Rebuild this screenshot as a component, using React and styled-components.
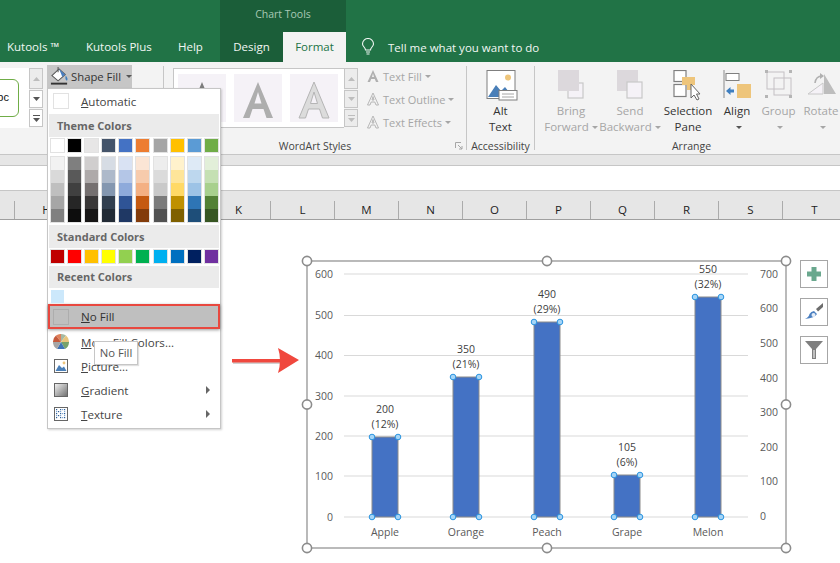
import React from "react";
import styled, { createGlobalStyle } from "styled-components";

const GlobalStyle = createGlobalStyle`
  html, body {
    margin: 0;
    padding: 0;
    background: #fff;
    font-family: "Open Sans", "Noto Sans", sans-serif;
    overflow: hidden;
  }
`;

const themeTop = ["#ffffff", "#000000", "#e7e6e6", "#44546a", "#4472c4", "#ed7d31", "#a5a5a5", "#ffc000", "#5b9bd5", "#70ad47"];
const themeShades = [
  ["#f2f2f2", "#d9d9d9", "#bfbfbf", "#a6a6a6", "#808080"],
  ["#7f7f7f", "#595959", "#404040", "#262626", "#0d0d0d"],
  ["#d0cece", "#aeaaaa", "#757070", "#3a3838", "#171616"],
  ["#d6dce4", "#adb9ca", "#8497b0", "#323f4f", "#222b35"],
  ["#d9e2f3", "#b4c6e7", "#8eaadb", "#2f5496", "#1f3864"],
  ["#fbe5d5", "#f7cbac", "#f4b083", "#c55a11", "#833c0b"],
  ["#ededed", "#dbdbdb", "#c9c9c9", "#7b7b7b", "#525252"],
  ["#fff2cc", "#fee599", "#ffd965", "#bf9000", "#7f6000"],
  ["#deeaf6", "#bdd7ee", "#9dc3e6", "#2e75b5", "#1e4e79"],
  ["#e2efd9", "#c5e0b3", "#a8d08d", "#538135", "#375623"],
];
const standard = ["#c00000", "#ff0000", "#ffc000", "#ffff00", "#92d050", "#00b050", "#00b0f0", "#0070c0", "#002060", "#7030a0"];

const columns = ["", "H", "", "", "K", "L", "M", "N", "O", "P", "Q", "R", "S", "T"];

const Page = styled.div`
  position: relative;
  width: 840px;
  height: 563px;
  overflow: hidden;
  background: #fff;
`;

const Header = styled.header`
  background: #217346;
`;

const TitleRow = styled.div`
  height: 32px;
  padding-left: 220px;
`;

const ContextLabel = styled.div`
  width: 126px;
  height: 32px;
  background: #1b5e39;
  color: #a9c9b5;
  font-size: 10.5px;
  line-height: 29px;
  text-align: center;
`;

const TabRow = styled.nav`
  height: 30px;
  display: flex;
  align-items: stretch;
`;

const Tab = styled.div`
  width: ${(p) => p.$width}px;
  padding-left: ${(p) => p.$pad || 0}px;
  box-sizing: border-box;
  font-size: 11.5px;
  line-height: 29px;
  white-space: nowrap;
  text-align: ${(p) => (p.$center ? "center" : "left")};
  color: ${(p) => (p.$active ? "#217346" : "#f2f7f4")};
  background: ${(p) => (p.$active ? "#f3f3f3" : p.$context ? "#1b5e39" : "transparent")};
`;

const TellMe = styled.div`
  display: flex;
  align-items: center;
  gap: 13px;
  padding-left: 15px;
  color: #f2f7f4;
  font-size: 11.5px;
  white-space: nowrap;
`;

const Ribbon = styled.section`
  height: 92px;
  display: flex;
  background: #f3f3f3;
  border-bottom: 1px solid #c6c6c6;
`;

const Group = styled.div`
  position: relative;
  width: ${(p) => p.$width}px;
  flex: none;
  box-sizing: border-box;
  display: flex;
  flex-direction: column;
  margin-top: 4px;
  margin-bottom: 4px;
  border-right: ${(p) => (p.$last ? "none" : "1px solid #c6c6c6")};
`;

const GroupBody = styled.div`
  height: 73px;
  display: flex;
  align-items: flex-start;
`;

const GroupLabel = styled.div`
  height: 11px;
  font-size: 10.5px;
  line-height: 14px;
  color: #444;
  text-align: center;
  white-space: nowrap;
  padding-left: ${(p) => p.$pad || 0}px;
`;

const Launcher = styled.svg`
  position: absolute;
  right: 3px;
  bottom: 0;
`;

const Gallery = styled.div`
  width: ${(p) => p.$width}px;
  height: 60px;
  margin-top: 2px;
  margin-left: ${(p) => p.$left || 0}px;
  box-sizing: border-box;
  flex: none;
  display: flex;
  align-items: center;
  gap: 8px;
  padding-left: ${(p) => p.$pad || 0}px;
  background: #fff;
  border: ${(p) => (p.$bordered ? "1px solid #c6c6c6" : "none")};
  border-width: ${(p) => (p.$bordered ? "1px 0 1px 1px" : "0")};
  overflow: hidden;
`;

const StyleSample = styled.div`
  width: 40px;
  height: 38px;
  margin-left: -21px;
  box-sizing: border-box;
  flex: none;
  border: 1px solid #70ad47;
  border-radius: 6px;
  font-family: "Liberation Sans", sans-serif;
  font-size: 11px;
  line-height: 34px;
  color: #111;
  text-align: right;
  padding-right: 9px;
  white-space: nowrap;
`;

const ScrollColumn = styled.div`
  width: 14px;
  height: 60px;
  margin-top: 2px;
  flex: none;
  display: flex;
  flex-direction: column;
  gap: 1px;
`;

const ScrollButton = styled.div`
  flex: ${(p) => (p.$tall ? "0 0 21px" : "0 0 18px")};
  box-sizing: border-box;
  display: flex;
  align-items: center;
  justify-content: center;
  border: 1px solid #c6c6c6;
  background: ${(p) => (p.$off ? "#ececec" : "#fff")};
`;

const ShapeFill = styled.div`
  margin-left: 4px;
  margin-top: -1px;
  width: 85px;
  height: 23px;
  flex: none;
  display: flex;
  align-items: center;
  gap: 2px;
  padding-left: 3px;
  box-sizing: border-box;
  background: #c6c6c6;
  color: #333;
  font-size: 11.3px;
  white-space: nowrap;
`;

const WordTile = styled.div`
  width: 48px;
  height: 48px;
  flex: none;
  display: flex;
  align-items: flex-end;
  justify-content: center;
  background: #f5f2f7;
  overflow: hidden;
`;

const TextEffects = styled.div`
  margin-left: 8px;
  display: flex;
  flex-direction: column;
  gap: 3px;
`;

const Caret = styled.span`
  display: inline-block;
  width: 0;
  height: 0;
  margin-left: 3px;
  vertical-align: middle;
  border-left: 3px solid transparent;
  border-right: 3px solid transparent;
  border-top: 3px solid ${(p) => p.$color || "#a6a6a6"};
`;

const EffectRow = styled.div`
  height: 20px;
  display: flex;
  align-items: center;
  gap: 3px;
  color: #a6a6a6;
  font-size: 11px;
  white-space: nowrap;

  ${Caret} {
    margin-left: 0;
  }
`;

const LargeButton = styled.div`
  width: ${(p) => p.$width}px;
  flex: none;
  display: flex;
  flex-direction: column;
  align-items: center;
  color: ${(p) => (p.$off ? "#a6a6a6" : "#333")};
  font-size: 11.5px;
  line-height: 16px;
  white-space: nowrap;
`;

const LargeIcon = styled.div`
  height: 37px;
  box-sizing: border-box;
  padding-top: 4px;
  display: flex;
  align-items: flex-start;
  justify-content: center;
`;

const Arrange = styled.div`
  display: flex;
  padding-left: 7px;
`;

const FormulaGap = styled.div`
  height: 10px;
  background: #e6e6e6;
  border-bottom: 1px solid #c6c6c6;
`;

const FormulaBar = styled.div`
  height: 24px;
  background: #fff;
  border-bottom: 1px solid #c6c6c6;
`;

const ColumnHeaders = styled.div`
  height: 28px;
  display: flex;
  background: #e6e6e6;
  border-bottom: 1px solid #9f9f9f;
`;

const ColumnHead = styled.div`
  flex: none;
  width: ${(p) => p.$width}px;
  height: 18px;
  margin-top: 10px;
  box-sizing: border-box;
  border-right: 1px solid #ababab;
  font-size: 11.5px;
  line-height: 18px;
  color: #222;
  text-align: center;
`;

const Sheet = styled.main`
  display: flex;
  align-items: flex-start;
  padding: 35px 0 0 232px;
`;

const ArrowWrap = styled.svg`
  flex: none;
  margin-top: 91px;
  margin-right: 1px;
`;

const ChartObject = styled.svg`
  flex: none;
`;

const ChartTools = styled.div`
  flex: none;
  display: flex;
  flex-direction: column;
  gap: 10px;
  margin-left: 7px;
  margin-top: 5px;
`;

const ChartTool = styled.div`
  width: 28px;
  height: 28px;
  box-sizing: border-box;
  display: flex;
  align-items: center;
  justify-content: center;
  background: #fff;
  border: 1px solid #a6a6a6;
`;

const Menu = styled.div`
  position: absolute;
  left: 47px;
  top: 88px;
  width: 174px;
  height: 341px;
  box-sizing: border-box;
  padding: 1px;
  background: #fff;
  border: 1px solid #c6c6c6;
  box-shadow: 1px 1px 2px rgba(0, 0, 0, 0.18);
  color: #444;
  font-size: 11.6px;
`;

const MenuRow = styled.div`
  height: 24px;
  box-sizing: border-box;
  padding-bottom: 2px;
  display: flex;
  align-items: center;
  white-space: nowrap;
  padding-left: ${(p) => p.$pad || 4}px;
`;

const MenuIcon = styled.div`
  width: 16px;
  height: 16px;
  flex: none;
  margin-right: 12px;
  display: flex;
  align-items: center;
  justify-content: center;
`;

const EmptySwatch = styled.div`
  width: 16px;
  height: 16px;
  box-sizing: border-box;
  flex: none;
  margin-right: 12px;
  border: 1px solid ${(p) => (p.$hot ? "#adadad" : "#e2e2e2")};
`;

const SubArrow = styled.span`
  margin-left: auto;
  margin-right: 9px;
  width: 0;
  height: 0;
  border-top: 4px solid transparent;
  border-bottom: 4px solid transparent;
  border-left: 4px solid #666;
`;

const MenuHead = styled.div`
  height: ${(p) => p.$height || 23}px;
  margin-top: ${(p) => p.$top || 0}px;
  padding-left: 8px;
  background: #ebebeb;
  color: #666;
  font-weight: 700;
  font-size: 11px;
  line-height: ${(p) => p.$height || 23}px;
`;

const SwatchGrid = styled.div`
  display: grid;
  grid-template-columns: repeat(10, 13px);
  column-gap: 4.1px;
  margin-left: 2px;
  margin-top: ${(p) => p.$top || 2}px;
`;

const Swatch = styled.div`
  height: 13px;
  background: ${(p) => p.$color};
  box-shadow: ${(p) => (p.$flat ? "none" : "0 0 0 1px #e2e2e2")};
`;

const ShadeColumn = styled.div`
  outline: 1px solid #e2e2e2;
`;

const NoFillRow = styled(MenuRow)`
  height: 25px;
  margin: 1px -1px 2px;
  padding-left: 3px;
  padding-bottom: 0;
  background: #bfbfbf;
  color: #333;
  border: 2px solid #e8483f;
  box-shadow: 0 1px 3px rgba(0, 0, 0, 0.4);
`;

const Tooltip = styled.div`
  position: absolute;
  left: 94px;
  top: 341px;
  width: 44px;
  height: 24px;
  box-sizing: border-box;
  background: #fff;
  border: 1px solid #c6c6c6;
  box-shadow: 1px 1px 1px rgba(0, 0, 0, 0.12);
  color: #555;
  font-size: 11.3px;
  line-height: 21px;
  text-align: center;
  white-space: nowrap;
`;

const BucketIcon = () => (
  <svg width="20" height="21" viewBox="0 0 20 21">
    <path d="M2 9.5 L9.5 2.5 L16 8.5 L8.5 15 Z" fill="#fff" stroke="#555" strokeWidth="1.1" />
    <path d="M8.5 0.5 V6" stroke="#555" strokeWidth="1.1" />
    <path d="M9.5 2.5 L16 8.5 L13 11 L11 6Z" fill="#4a7fc0" />
    <path d="M16.5 9.5 Q19.5 13 17.8 15 Q15.5 14 16.5 9.5Z" fill="#3f7fc0" />
    <rect x="1" y="17" width="17" height="2" fill="#333" />
  </svg>
);

const LetterA = ({ size = 14, outline }) => (
  <svg width={size} height={size} viewBox="0 0 14 14">
    <path
      d="M7 1 L12.5 13 H10 L8.8 10 H5.2 L4 13 H1.5 Z M6 8 H8 L7 4.5 Z"
      fill={outline ? "#f3f3f3" : "#b0b0b0"}
      stroke={outline ? "#b0b0b0" : "none"}
      strokeWidth="0.9"
      fillRule="evenodd"
    />
  </svg>
);

const WordA = ({ outline, dark }) => (
  <svg width="40" height="44" viewBox="0 0 40 44">
    <path
      d="M20 4 L35 40 H28.5 L25.5 31 H14.5 L11.5 40 H5 Z M16.5 25.5 H23.5 L20 14 Z"
      fill={outline ? "#dcdcdc" : dark ? "#7d7d7d" : "#aeaeae"}
      stroke={outline ? "#b5b5b5" : "none"}
      strokeWidth="1"
      fillRule="evenodd"
    />
  </svg>
);

const ChevUp = ({ color = "#bdbdbd" }) => (
  <svg width="7" height="4" viewBox="0 0 7 4"><path d="M0 4 L3.5 0 L7 4Z" fill={color} /></svg>
);
const ChevDown = ({ color = "#555" }) => (
  <svg width="7" height="4" viewBox="0 0 7 4"><path d="M0 0 L3.5 4 L7 0Z" fill={color} /></svg>
);
const ChevMore = ({ color = "#555" }) => (
  <svg width="7" height="7" viewBox="0 0 7 7">
    <rect width="7" height="1" fill={color} />
    <path d="M0 3 L3.5 7 L7 3Z" fill={color} />
  </svg>
);

const Bulb = () => (
  <svg width="14" height="18" viewBox="0 0 14 18" fill="none" stroke="#f2f7f4" strokeWidth="1.1">
    <path d="M4.5 12 C4.5 9.5 1.5 8.5 1.5 6 A5.5 5.5 0 0 1 12.5 6 C12.5 8.5 9.5 9.5 9.5 12 Z" />
    <path d="M5 14 H9 M5.5 16 H8.5" />
  </svg>
);

const AltIcon = () => (
  <svg width="34" height="31" viewBox="-2 0 34 31">
    <rect x="1" y="0.5" width="28" height="28" fill="#fff" stroke="#7f7f7f" />
    <circle cx="22" cy="7.5" r="3" fill="#eec57b" />
    <path d="M2 27 L10 15 L15 21 L19 17 L27 27Z" fill="#4a7fb8" />
    <rect x="13" y="20.5" width="18" height="9.5" fill="#fff" stroke="#7f7f7f" />
    <path d="M16 24 H28 M16 27 H28" stroke="#a6a6a6" />
  </svg>
);

const ForwardIcon = () => (
  <svg width="28" height="30" viewBox="0 0 28 30">
    <rect x="11" y="13" width="15" height="15" fill="#f5f2f7" stroke="#c8c8c8" strokeWidth="1.2" />
    <rect x="1" y="0" width="21" height="21" fill="#dcd8dc" />
  </svg>
);

const BackwardIcon = () => (
  <svg width="28" height="30" viewBox="0 0 28 30">
    <rect x="1" y="0" width="21" height="21" fill="#dcd8dc" />
    <rect x="11" y="12" width="15" height="16" fill="#f5f2f7" stroke="#c8c8c8" strokeWidth="1.2" />
  </svg>
);

const SelectionIcon = () => (
  <svg width="30" height="31" viewBox="0 0 30 31">
    <rect x="1" y="0.5" width="12" height="11" fill="#fff" stroke="#7f7f7f" strokeWidth="1.2" />
    <rect x="1" y="14.5" width="12" height="12" fill="#fff" stroke="#7f7f7f" strokeWidth="1.2" />
    <path d="M9 7 H22 V15 H18 V20 H14 V15 H9Z" fill="#eec57b" />
    <path d="M18 14 V28 L21 25 L24 30 L26 29 L23.5 24 L27 24 Z" fill="#fff" stroke="#666" strokeWidth="1" />
  </svg>
);

const AlignIcon = () => (
  <svg width="29" height="30" viewBox="0 0 29 30">
    <path d="M1 0 V28" stroke="#8a8a8a" />
    <rect x="3" y="3.5" width="13" height="7" fill="#fff" stroke="#7f7f7f" />
    <rect x="14" y="14" width="14" height="14" fill="#eec57b" />
    <path d="M3 21 L7.5 17 V19.5 H11 V22.5 H7.5 V25Z" fill="#3f7fc0" />
  </svg>
);

const GroupIcon = () => (
  <svg width="30" height="30" viewBox="0 0 30 30" fill="none" stroke="#c4c0c4">
    <rect x="3" y="2" width="17" height="17" />
    <rect x="10" y="8" width="17" height="17" />
    <rect x="1" y="0" width="3" height="3" fill="#b5b5b5" stroke="none" />
    <rect x="25" y="0" width="3" height="3" fill="#b5b5b5" stroke="none" />
    <rect x="1" y="25" width="3" height="3" fill="#b5b5b5" stroke="none" />
    <rect x="25" y="25" width="3" height="3" fill="#b5b5b5" stroke="none" />
  </svg>
);

const RotateIcon = () => (
  <svg width="32" height="30" viewBox="0 0 32 30">
    <path d="M19 4 L31 24 H19Z" fill="#bdbdbd" />
    <path d="M18 13 L3 24 H18Z" fill="#f5f2f7" stroke="#c8c8c8" />
    <path d="M10 13 Q11 6 17 6" fill="none" stroke="#b0b0b0" strokeWidth="1.6" />
    <path d="M15 3 L19 6 L15 9Z" fill="#b0b0b0" />
  </svg>
);

const WheelIcon = () => (
  <svg width="16" height="16" viewBox="0 0 16 16">
    <path d="M8 8 L3 1.5 A8 8 0 0 1 8 0Z" fill="#e0815a" />
    <path d="M8 8 V0 A8 8 0 0 1 13 1.5Z" fill="#a7b9a2" />
    <path d="M8 8 L13 1.5 A8 8 0 0 1 16 8Z" fill="#e8c47c" />
    <path d="M8 8 H16 A8 8 0 0 1 12 15Z" fill="#77a16a" />
    <path d="M8 8 L12 15 H4Z" fill="#3f73b5" />
    <path d="M8 8 L4 15 A8 8 0 0 1 0 8Z" fill="#a6a6a6" />
    <path d="M8 8 H0 A8 8 0 0 1 3 1.5Z" fill="#c55a3c" />
  </svg>
);

const PictureIcon = () => (
  <svg width="14" height="14" viewBox="0 0 14 14">
    <rect x="0.5" y="0.5" width="13" height="13" fill="#fff" stroke="#666" />
    <circle cx="10" cy="4" r="1.4" fill="#eec57b" />
    <path d="M1.5 12 L5 6 L8 9 L10 7.5 L12.5 12Z" fill="#4a7fb8" />
  </svg>
);

const GradientIcon = () => (
  <svg width="14" height="14" viewBox="0 0 14 14">
    <defs>
      <linearGradient id="menuGrad" x1="0" y1="0" x2="1" y2="1">
        <stop offset="0" stopColor="#f5f5f5" />
        <stop offset="1" stopColor="#6d6d6d" />
      </linearGradient>
    </defs>
    <rect x="0.5" y="0.5" width="13" height="13" fill="url(#menuGrad)" stroke="#666" />
  </svg>
);

const TextureIcon = () => {
  const dots = [];
  for (let y = 0; y < 5; y++) {
    for (let x = 0; x < 5; x++) {
      if ((x * 3 + y * 2) % 4 !== 3) {
        dots.push(<rect key={`${x}-${y}`} x={2 + x * 2} y={2 + y * 2} width="1.2" height="1.2" fill={(x + y) % 2 ? "#7aa5d6" : "#2f5f96"} />);
      }
    }
  }
  return (
    <svg width="14" height="14" viewBox="0 0 14 14">
      <rect x="0.5" y="0.5" width="13" height="13" fill="#fff" stroke="#666" />
      {dots}
    </svg>
  );
};

const PlusIcon = () => (
  <svg width="16" height="16" viewBox="0 0 16 16">
    <path d="M5.5 1 H10.5 V5.5 H15 V10.5 H10.5 V15 H5.5 V10.5 H1 V5.5 H5.5Z" fill="#6aa88e" />
  </svg>
);

const BrushIcon = () => (
  <svg width="20" height="20" viewBox="0 0 20 20">
    <path d="M19 1 L12 7 L14 9.5 L19 5Z" fill="#6d6d6d" />
    <path d="M10 9 L13 12 Q11 16 1 17 Q5 15 5.5 12 Q7 9.5 10 9Z" fill="#4a7fc0" />
    <circle cx="9.5" cy="13" r="2" fill="#fff" opacity="0.85" />
  </svg>
);

const FunnelIcon = () => (
  <svg width="20" height="20" viewBox="0 0 20 20">
    <path d="M1 1 H19 L12 9 V19 H8 V9Z" fill="#7f7f7f" />
    <path d="M9.5 10 H10.5 V18 H9.5Z" fill="#fff" />
  </svg>
);

const Arrow = () => (
  <ArrowWrap width="68" height="30" viewBox="0 0 68 30">
    <path d="M1 15.5 H50 V18 H1Z" fill="#000" opacity="0.18" />
    <path d="M0 13 H50 V16.5 H0Z" fill="#f0483e" />
    <path d="M67 14 L46 2 Q50 14 46 27Z" fill="#f0483e" />
  </ArrowWrap>
);

const leftTicks = [600, 500, 400, 300, 200, 100, 0];
const leftY = [274, 315.5, 355.5, 396, 436, 476, 517];
const rightTicks = [700, 600, 500, 400, 300, 200, 100, 0];
const rightY = [274, 308, 343, 378, 412, 447, 481, 516];
const bars = [
  { name: "Apple", x: 372, top: 437, value: "200", pct: "(12%)" },
  { name: "Orange", x: 453, top: 377, value: "350", pct: "(21%)" },
  { name: "Peach", x: 534, top: 322, value: "490", pct: "(29%)" },
  { name: "Grape", x: 614, top: 475, value: "105", pct: "(6%)" },
  { name: "Melon", x: 695, top: 297, value: "550", pct: "(32%)" },
];

// svg coords are page coords, the viewBox does the shift
const Chart = () => {
  const frame = [
    [307, 261], [547, 261], [786, 261],
    [307, 404.5], [786, 404.5],
    [307, 548], [547, 548], [786, 548],
  ];
  return (
    <ChartObject width="492" height="302" viewBox="301 255 492 302" fontFamily="'Open Sans', sans-serif" fontSize="10.5" fill="#595959">
      <rect x="307" y="261" width="479" height="287" fill="#fff" stroke="#8c8c8c" strokeWidth="1.2" />
      {leftY.map((y) => (
        <line key={y} x1="344" x2="748" y1={y} y2={y} stroke="#d9d9d9" strokeWidth="1" />
      ))}
      {leftTicks.map((t, i) => (
        <text key={t} x="333" y={leftY[i] + 3.5} textAnchor="end">{t}</text>
      ))}
      {rightTicks.map((t, i) => (
        <text key={t} x="760" y={rightY[i] + 3.5}>{t}</text>
      ))}
      {bars.map((b) => (
        <g key={b.name}>
          <rect x={b.x} y={b.top} width="26" height={517 - b.top} fill="#4472c4" stroke="#8c8c8c" strokeWidth="1" />
          {[[b.x, b.top], [b.x + 26, b.top], [b.x, 517], [b.x + 26, 517]].map(([cx, cy], i) => (
            <circle key={i} cx={cx} cy={cy} r="2.8" fill="#a6d5f7" stroke="#2a94e0" strokeWidth="1" />
          ))}
          <text x={b.x + 13} y={b.top - 24} textAnchor="middle" fill="#404040">{b.value}</text>
          <text x={b.x + 13} y={b.top - 9} textAnchor="middle" fill="#404040">{b.pct}</text>
          <text x={b.x + 13} y="536" textAnchor="middle">{b.name}</text>
        </g>
      ))}
      {frame.map(([cx, cy]) => (
        <circle key={`${cx}-${cy}`} cx={cx} cy={cy} r="4.6" fill="#fff" stroke="#8c8c8c" strokeWidth="1.6" />
      ))}
    </ChartObject>
  );
};

const App = () => {
  return (
    <Page>
      <GlobalStyle />
      <Header>
        <TitleRow>
          <ContextLabel>Chart Tools</ContextLabel>
        </TitleRow>
        <TabRow>
          <Tab $width={86} $pad={7}>Kutools ™</Tab>
          <Tab $width={92}>Kutools Plus</Tab>
          <Tab $width={42}>Help</Tab>
          <Tab $width={63} $center $context>Design</Tab>
          <Tab $width={63} $center $active>Format</Tab>
          <TellMe>
            <Bulb />
            Tell me what you want to do
          </TellMe>
        </TabRow>
      </Header>

      <Ribbon>
        <Group $width={164}>
          <GroupBody>
            <Gallery $width={29}>
              <StyleSample>Abc</StyleSample>
            </Gallery>
            <ScrollColumn>
              <ScrollButton $tall $off><ChevUp /></ScrollButton>
              <ScrollButton><ChevDown /></ScrollButton>
              <ScrollButton><ChevMore /></ScrollButton>
            </ScrollColumn>
            <ShapeFill>
              <BucketIcon />
              Shape Fill
              <Caret $color="#555" />
            </ShapeFill>
          </GroupBody>
        </Group>

        <Group $width={303}>
          <GroupBody>
            <Gallery $width={171} $left={9} $pad={4} $bordered>
              <WordTile><WordA dark /></WordTile>
              <WordTile><WordA /></WordTile>
              <WordTile><WordA outline /></WordTile>
            </Gallery>
            <ScrollColumn>
              <ScrollButton $tall $off><ChevUp /></ScrollButton>
              <ScrollButton $off><ChevDown color="#bdbdbd" /></ScrollButton>
              <ScrollButton $off><ChevMore color="#bdbdbd" /></ScrollButton>
            </ScrollColumn>
            <TextEffects>
              <EffectRow><LetterA />Text Fill<Caret /></EffectRow>
              <EffectRow><LetterA outline />Text Outline<Caret /></EffectRow>
              <EffectRow><LetterA outline />Text Effects<Caret /></EffectRow>
            </TextEffects>
          </GroupBody>
          <GroupLabel>WordArt Styles</GroupLabel>
          <Launcher width="8" height="8" viewBox="0 0 8 8" fill="none" stroke="#a6a6a6">
            <path d="M0.5 6 V0.5 H6 M3 3 L7 7 M7 4 V7 H4" />
          </Launcher>
        </Group>

        <Group $width={68}>
          <GroupBody>
            <LargeButton $width={67}>
              <LargeIcon><AltIcon /></LargeIcon>
              <div>Alt</div>
              <div>Text</div>
            </LargeButton>
          </GroupBody>
          <GroupLabel>Accessibility</GroupLabel>
        </Group>

        <Group $width={305} $last>
          <GroupBody>
            <Arrange>
              <LargeButton $width={58} $off>
                <LargeIcon><ForwardIcon /></LargeIcon>
                <div>Bring</div>
                <div>Forward<Caret /></div>
              </LargeButton>
              <LargeButton $width={60} $off>
                <LargeIcon><BackwardIcon /></LargeIcon>
                <div>Send</div>
                <div>Backward<Caret /></div>
              </LargeButton>
              <LargeButton $width={56}>
                <LargeIcon><SelectionIcon /></LargeIcon>
                <div>Selection</div>
                <div>Pane</div>
              </LargeButton>
              <LargeButton $width={42}>
                <LargeIcon><AlignIcon /></LargeIcon>
                <div>Align</div>
                <div><Caret $color="#555" /></div>
              </LargeButton>
              <LargeButton $width={41} $off>
                <LargeIcon><GroupIcon /></LargeIcon>
                <div>Group</div>
                <div><Caret /></div>
              </LargeButton>
              <LargeButton $width={44} $off>
                <LargeIcon><RotateIcon /></LargeIcon>
                <div>Rotate</div>
                <div><Caret /></div>
              </LargeButton>
            </Arrange>
          </GroupBody>
          <GroupLabel $pad={8}>Arrange</GroupLabel>
        </Group>
      </Ribbon>

      <FormulaGap />
      <FormulaBar />
      <ColumnHeaders>
        {columns.map((c, i) => (
          <ColumnHead key={i} $width={i === 0 ? 15 : 64}>{c}</ColumnHead>
        ))}
      </ColumnHeaders>

      <Sheet>
        <Arrow />
        <Chart />
        <ChartTools>
          <ChartTool><PlusIcon /></ChartTool>
          <ChartTool><BrushIcon /></ChartTool>
          <ChartTool><FunnelIcon /></ChartTool>
        </ChartTools>
      </Sheet>

      <Menu>
        <MenuRow>
          <EmptySwatch />
          <span><u>A</u>utomatic</span>
        </MenuRow>
        <MenuHead>Theme Colors</MenuHead>
        <SwatchGrid>
          {themeTop.map((c) => <Swatch key={c} $color={c} />)}
        </SwatchGrid>
        <SwatchGrid $top={5}>
          {themeShades.map((shades, i) => (
            <ShadeColumn key={i}>
              {shades.map((c) => <Swatch key={c} $color={c} $flat />)}
            </ShadeColumn>
          ))}
        </SwatchGrid>
        <MenuHead $top={3}>Standard Colors</MenuHead>
        <SwatchGrid>
          {standard.map((c) => <Swatch key={c} $color={c} />)}
        </SwatchGrid>
        <MenuHead $top={3} $height={22}>Recent Colors</MenuHead>
        <SwatchGrid>
          <Swatch $color="#cce8fb" $flat />
        </SwatchGrid>
        <NoFillRow>
          <EmptySwatch $hot />
          <span><u>N</u>o Fill</span>
        </NoFillRow>
        <MenuRow>
          <MenuIcon><WheelIcon /></MenuIcon>
          <span><u>M</u>ore Fill Colors...</span>
        </MenuRow>
        <MenuRow>
          <MenuIcon><PictureIcon /></MenuIcon>
          <span><u>P</u>icture...</span>
        </MenuRow>
        <MenuRow>
          <MenuIcon><GradientIcon /></MenuIcon>
          <span><u>G</u>radient</span>
          <SubArrow />
        </MenuRow>
        <MenuRow>
          <MenuIcon><TextureIcon /></MenuIcon>
          <span><u>T</u>exture</span>
          <SubArrow />
        </MenuRow>
      </Menu>
      <Tooltip>No Fill</Tooltip>
    </Page>
  );
};

export default App;
